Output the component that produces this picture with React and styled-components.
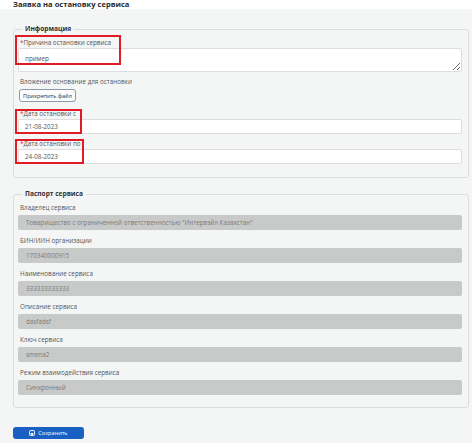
import React from 'react';
import styled, { createGlobalStyle } from 'styled-components';

const GlobalStyle = createGlobalStyle`
  body {
    margin: 0;
    background: #ffffff;
    font-family: "Open Sans", "Noto Sans", sans-serif;
  }
`;

const Page = styled.div`
  width: 472px;
  height: 445px;
  background: #ffffff;
`;

const Title = styled.div`
  height: 9px;
  padding-left: 13px;
  font-size: 7.6px;
  line-height: 9px;
  font-weight: 700;
  color: #2b2b2b;
`;

const Body = styled.div`
  background: #f4f5f5;
  height: 434px;
  padding: 16px 3px 0 13px;
  box-sizing: border-box;
`;

const Fieldset = styled.fieldset`
  margin: 0 0 ${(p) => p.gap || 0}px 0;
  padding: 3px 6px ${(p) => p.bottom}px 4px;
  border: 1px solid #dcdede;
  border-radius: 3px;
  min-width: 0;
`;

const Legend = styled.legend`
  padding: 0 3px;
  margin-left: 4px;
  font-size: 6.6px;
  line-height: 8px;
  font-weight: 700;
  color: #333;
`;

const Field = styled.div`
  position: relative;
  margin-top: ${(p) => p.top || 0}px;
`;

const Label = styled.div`
  height: 10px;
  line-height: 10px;
  font-size: 6.3px;
  color: #555;
  padding-left: 2px;
  margin-bottom: ${(p) => p.gap || 0}px;
  white-space: nowrap;
`;

const Req = styled.span`
  color: #d33;
`;

// red annotation frames drawn over the fields
const Highlight = styled.div`
  position: absolute;
  left: -3px;
  top: ${(p) => p.top}px;
  width: ${(p) => p.w}px;
  height: ${(p) => p.h}px;
  border: 2px solid #e01b24;
  box-sizing: border-box;
  pointer-events: none;
`;

const TextArea = styled.textarea`
  display: block;
  width: 100%;
  height: 24px;
  box-sizing: border-box;
  margin: 0;
  padding: 5px 6px;
  border: 1px solid #dddddd;
  border-radius: 2px;
  background: #fff;
  font-family: inherit;
  font-size: 6.3px;
  color: #555;
  resize: vertical;
  outline: none;
`;

const Input = styled.input`
  display: block;
  width: 100%;
  height: 15px;
  box-sizing: border-box;
  margin: 0;
  padding: 0 ${(p) => (p.readOnly ? 8 : 6)}px;
  border: ${(p) => (p.readOnly ? 'none' : '1px solid #dddddd')};
  border-radius: 2px;
  background: ${(p) => (p.readOnly ? '#c8c9c9' : '#ffffff')};
  font-family: inherit;
  font-size: 6.3px;
  color: ${(p) => (p.readOnly ? '#7b7b7b' : '#555')};
  outline: none;
`;

const AttachButton = styled.button`
  display: block;
  margin-left: 1px;
  height: 13px;
  width: 57px;
  padding: 0;
  border: 1px solid #8a9bb0;
  border-radius: 3px;
  background: #fbfbfb;
  font-family: inherit;
  font-size: 5.6px;
  color: #333;
`;

const SaveButton = styled.button`
  display: flex;
  align-items: center;
  justify-content: center;
  gap: 3px;
  margin-top: 19px;
  width: 71px;
  height: 12px;
  padding: 0;
  border: none;
  border-radius: 3px;
  background: #1a5fc2;
  color: #fff;
  font-family: inherit;
  font-size: 5.6px;
`;

const SaveIcon = () => (
  <svg width="6" height="6" viewBox="0 0 10 10">
    <rect x="1" y="1" width="8" height="8" rx="1" fill="none" stroke="#fff" strokeWidth="1.6" />
    <rect x="3" y="5" width="4" height="3" fill="#fff" />
  </svg>
);

const passport = [
  ['Владелец сервиса', 'Товарищество с ограниченной ответственностью "Интервэйл Казахстан"'],
  ['БИН/ИИН организации', '170340000915'],
  ['Наименование сервиса', '333333333333'],
  ['Описание сервиса', 'dasfadsf'],
  ['Ключ сервиса', 'smena2'],
  ['Режим взаимодействия сервиса', 'Синхронный'],
];

export default function App() {
  return (
    <Page>
      <GlobalStyle />
      <Title>Заявка на остановку сервиса</Title>
      <Body>
        <Fieldset bottom={13} gap={12}>
          <Legend>Информация</Legend>
          <Field top={2}>
            <Highlight top={-3} w={106} h={30} />
            <Label><Req>*</Req>Причина остановки сервиса</Label>
            <TextArea defaultValue="пример" />
          </Field>
          <Field top={5}>
            <Label gap={2}>Вложение основание для остановки</Label>
            <AttachButton>Прикрепить файл</AttachButton>
          </Field>
          <Field top={7}>
            <Highlight top={0} w={67} h={25} />
            <Label><Req>*</Req>Дата остановки с</Label>
            <Input defaultValue="21-08-2023" />
          </Field>
          <Field top={5}>
            <Highlight top={0} w={69} h={25} />
            <Label><Req>*</Req>Дата остановки по</Label>
            <Input defaultValue="24-08-2023" />
          </Field>
        </Fieldset>
        <Fieldset bottom={12}>
          <Legend>Паспорт сервиса</Legend>
          {passport.map(([label, value], i) => (
            <Field key={label} top={i === 0 ? 2 : 6}>
              <Label gap={2}>{label}</Label>
              <Input readOnly value={value} />
            </Field>
          ))}
        </Fieldset>
        <SaveButton>
          <SaveIcon />
          Сохранить
        </SaveButton>
      </Body>
    </Page>
  );
}
